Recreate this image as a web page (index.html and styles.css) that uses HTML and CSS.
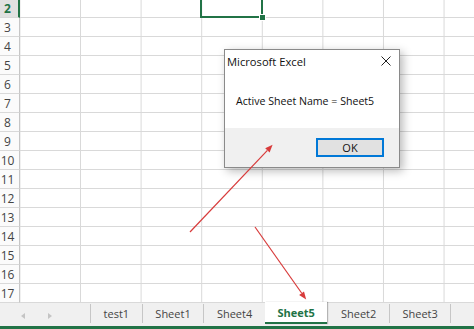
FILE: index.html
```html
<!DOCTYPE html>
<html lang="en">
  <head>
    <meta charset="UTF-8" />
    <title>Active Sheet Name</title>
    <link rel="stylesheet" href="styles.css">
  </head>
  <body>
    <div class="window">
      <div class="sheet">
        <div class="row-heads">
          <div class="rh active">2</div>
          <div class="rh">3</div>
          <div class="rh">4</div>
          <div class="rh">5</div>
          <div class="rh">6</div>
          <div class="rh">7</div>
          <div class="rh">8</div>
          <div class="rh">9</div>
          <div class="rh">10</div>
          <div class="rh">11</div>
          <div class="rh">12</div>
          <div class="rh">13</div>
          <div class="rh">14</div>
          <div class="rh">15</div>
          <div class="rh">16</div>
          <div class="rh">17</div>
        </div>
        <div class="cells">
          <div class="selection"><span class="fill-handle"></span></div>
        </div>
      </div>

      <div class="tabbar">
        <div class="tab-nav">
          <svg width="4" height="6" viewBox="0 0 4 6"><polygon points="4,0 4,6 0,3" /></svg>
          <svg width="4" height="6" viewBox="0 0 4 6"><polygon points="0,0 0,6 4,3" /></svg>
        </div>
        <div class="tab">test1</div>
        <div class="tab">Sheet1</div>
        <div class="tab">Sheet4</div>
        <div class="tab active">Sheet5</div>
        <div class="tab">Sheet2</div>
        <div class="tab last">Sheet3</div>
      </div>
      <div class="status-strip"></div>

      <!-- message box -->
      <div class="msgbox">
        <div class="msg-title">
          <span>Microsoft Excel</span>
          <svg class="close" width="10" height="10" viewBox="0 0 10 10">
            <path d="M0.5 0.5 L9.5 9.5 M9.5 0.5 L0.5 9.5" />
          </svg>
        </div>
        <div class="msg-body">Active Sheet Name = Sheet5</div>
        <div class="msg-foot">
          <button class="ok-btn" type="button">OK</button>
        </div>
      </div>

      <svg class="arrows" width="474" height="329" viewBox="0 0 474 329">
        <line x1="190" y1="232" x2="267.4" y2="150.3" />
        <polygon points="272.6,144.8 269.6,152.4 265.2,148.3" />
        <line x1="255" y1="227" x2="301.6" y2="293" />
        <polygon points="306.2,299.5 299.1,294.9 304,291.4" />
      </svg>
    </div>
  </body>
</html>
```

FILE: styles.css
```css
* {
  margin: 0;
  padding: 0;
  box-sizing: border-box;
}

body {
  width: 474px;
  height: 329px;
  overflow: hidden;
  background: #fff;
  font-family: "Open Sans", "Noto Sans", sans-serif;
  color: #222;
}

.window {
  position: relative;
  height: 329px;
  display: flex;
  flex-direction: column;
  overflow: hidden;
}

/* grid */
.sheet {
  display: flex;
  height: 304px;
  margin-top: -1px;
  flex-shrink: 0;
}

.row-heads {
  width: 20px;
  flex-shrink: 0;
  background: #fbfbfb;
}

.rh {
  height: 19px;
  border-bottom: 1px solid #d9d9d9;
  border-right: 1px solid #c6c6c6;
  padding-right: 4px;
  font-size: 12px;
  line-height: 19px;
  text-align: center;
  color: #444;
}

.rh.active {
  background: #e1e1e1;
  color: #217346;
  font-weight: bold;
  border-right: 2px solid #217346;
  padding-right: 3px;
}

.cells {
  flex: 1;
  position: relative;
  background-color: #fff;
  background-image:
    linear-gradient(to right, #d9d9d9 1px, transparent 1px),
    linear-gradient(to bottom, #d9d9d9 1px, transparent 1px);
  background-size: 60.6px 19px;
  background-position: -0.6px -1px;
}

.selection {
  position: absolute;
  left: 180px;
  top: -2px;
  width: 63px;
  height: 21px;
  border: 2px solid #217346;
}

.fill-handle {
  position: absolute;
  right: -5px;
  bottom: -5px;
  width: 7px;
  height: 7px;
  background: #217346;
  border: 1px solid #fff;
}

/* sheet tabs */
.tabbar {
  height: 23px;
  display: flex;
  background: #f0f0f0;
  flex-shrink: 0;
}

.tab-nav {
  width: 90px;
  display: flex;
  align-items: center;
  gap: 23px;
  padding-left: 21px;
  padding-top: 2px;
}

.tab-nav svg {
  fill: #c4c4c4;
}

.tab {
  margin: 1px 0 3px;
  border-left: 1px solid #c6c6c6;
  padding: 0 12.6px;
  display: flex;
  align-items: center;
  font-size: 11px;
  color: #444;
}

.tab.last {
  border-right: 1px solid #c6c6c6;
}

.tab.active {
  margin: -1px 0 2px;
  padding-top: 1px;
  border-left: none;
  background: #fff;
  color: #217346;
  font-weight: bold;
  border-bottom: 2px solid #217346;
  box-shadow: 1px 0 1px rgba(0, 0, 0, 0.25);
  position: relative;
}

.tab.active + .tab {
  border-left-color: transparent;
}

.status-strip {
  height: 3px;
  background: #217346;
}

/* message box */
.msgbox {
  position: absolute;
  left: 224px;
  top: 49px;
  width: 176px;
  height: 119px;
  display: flex;
  flex-direction: column;
  background: #fff;
  border: 1px solid #8a8a8a;
  box-shadow: 3px 3px 9px rgba(0, 0, 0, 0.28);
}

.msg-title {
  height: 22px;
  display: flex;
  align-items: center;
  justify-content: space-between;
  padding: 0 8px 0 2px;
  font-size: 11.2px;
  color: #111;
}

.close {
  stroke: #222;
  stroke-width: 1;
  fill: none;
}

.msg-body {
  flex: 1;
  display: flex;
  align-items: center;
  padding: 2px 0 0 11px;
  font-size: 10.6px;
  color: #111;
}

.msg-foot {
  height: 39px;
  display: flex;
  justify-content: flex-end;
  padding: 10px 15px 0 0;
  background: #f0f0f0;
}

.ok-btn {
  width: 68px;
  height: 19px;
  border: 2px solid #0078d7;
  background: #e1e1e1;
  font-family: inherit;
  font-size: 11px;
  color: #111;
}

/* annotation arrows */
.arrows {
  position: absolute;
  left: 0;
  top: 0;
  pointer-events: none;
}

.arrows line {
  stroke: #d83b3b;
  stroke-width: 1.2;
}

.arrows polygon {
  fill: #d83b3b;
}
```
